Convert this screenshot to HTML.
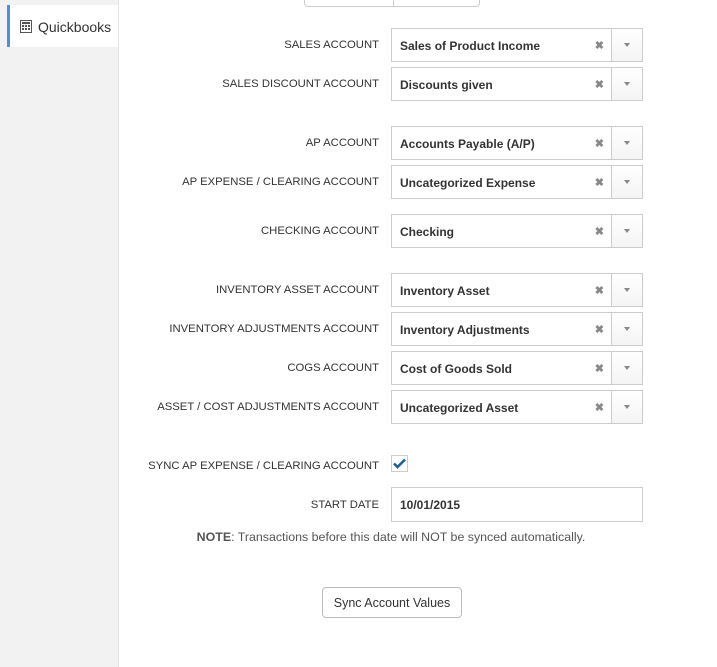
<!DOCTYPE html><html><head><style>
body{margin:0;width:717px;height:667px;background:#fff;font-family:"Liberation Sans",sans-serif;position:relative;overflow:hidden;color:#333}
.side{position:absolute;left:0;top:0;width:118px;height:667px;background:#f2f2f2;border-right:1px solid #e6e6e6}
.tab{position:absolute;left:7px;top:5px;width:111px;height:42px;background:#fff;border-left:3px solid #4a90e2;box-sizing:border-box;font-size:14px;line-height:44px;padding-left:28px;color:#333}
.lbl{position:absolute;right:338px;font-size:11.3px;color:#333;text-align:right;white-space:nowrap;margin-top:2px}
.sel{position:absolute;left:391px;width:252px;height:34px;border:1px solid #ccc;box-sizing:border-box;font-size:12px;font-weight:bold;line-height:34px;padding-left:8px;color:#333}
.sel .x{position:absolute;right:38px;top:0;color:#888;font-size:11px}
.sel .d{position:absolute;right:0;top:0;width:30px;height:32px;border-left:1px solid #ccc;background:linear-gradient(#fff,#f4f4f4)}
.sel .d:after{content:"";position:absolute;left:12px;top:14px;border:3.5px solid transparent;border-top:4px solid #888}
</style></head><body>
<div class="side"></div>
<div class="tab"><svg style="position:absolute;left:10px;top:15px" width="12" height="13" viewBox="0 0 12 13"><rect x="0.5" y="0.5" width="11" height="12" fill="none" stroke="#555"/><rect x="2" y="2" width="8" height="2" fill="#555"/><g fill="#555"><rect x="2" y="5" width="2" height="2"/><rect x="5" y="5" width="2" height="2"/><rect x="8" y="5" width="2" height="2"/><rect x="2" y="8" width="2" height="2"/><rect x="5" y="8" width="2" height="2"/><rect x="8" y="8" width="2" height="2"/></g></svg>Quickbooks</div>
<div style="position:absolute;left:304px;top:-10px;width:176px;height:17px;border:1px solid #ccc;border-radius:4px;box-sizing:border-box"></div>
<div style="position:absolute;left:393px;top:-10px;width:1px;height:17px;background:#ccc"></div>

<div class="lbl" style="top:37px">SALES ACCOUNT</div><div class="sel" style="top:28px">Sales of Product Income<span class="x">✖</span><span class="d"></span></div>
<div class="lbl" style="top:76px">SALES DISCOUNT ACCOUNT</div><div class="sel" style="top:67px">Discounts given<span class="x">✖</span><span class="d"></span></div>
<div class="lbl" style="top:135px">AP ACCOUNT</div><div class="sel" style="top:126px">Accounts Payable (A/P)<span class="x">✖</span><span class="d"></span></div>
<div class="lbl" style="top:174px">AP EXPENSE / CLEARING ACCOUNT</div><div class="sel" style="top:165px">Uncategorized Expense<span class="x">✖</span><span class="d"></span></div>
<div class="lbl" style="top:223px">CHECKING ACCOUNT</div><div class="sel" style="top:214px">Checking<span class="x">✖</span><span class="d"></span></div>
<div class="lbl" style="top:282px">INVENTORY ASSET ACCOUNT</div><div class="sel" style="top:273px">Inventory Asset<span class="x">✖</span><span class="d"></span></div>
<div class="lbl" style="top:321px">INVENTORY ADJUSTMENTS ACCOUNT</div><div class="sel" style="top:312px">Inventory Adjustments<span class="x">✖</span><span class="d"></span></div>
<div class="lbl" style="top:360px">COGS ACCOUNT</div><div class="sel" style="top:351px">Cost of Goods Sold<span class="x">✖</span><span class="d"></span></div>
<div class="lbl" style="top:399px">ASSET / COST ADJUSTMENTS ACCOUNT</div><div class="sel" style="top:390px">Uncategorized Asset<span class="x">✖</span><span class="d"></span></div>

<div class="lbl" style="top:458px">SYNC AP EXPENSE / CLEARING ACCOUNT</div>
<div style="position:absolute;left:391px;top:455px;width:17px;height:17px;border:1px solid #ccc;box-sizing:border-box"><svg width="15" height="15" viewBox="0 0 15 15" style="position:absolute;left:0;top:0"><path d="M2 7.5L5.5 11L13 3.5" stroke="#1f5f99" stroke-width="2.6" fill="none"/></svg></div>
<div class="lbl" style="top:497px">START DATE</div>
<div class="sel" style="top:487px;height:35px;line-height:35px">10/01/2015</div>
<div style="position:absolute;left:91px;width:600px;top:530px;text-align:center;font-size:12.4px;color:#555"><b>NOTE</b>: Transactions before this date will NOT be synced automatically.</div>
<div style="position:absolute;left:322px;top:587px;width:140px;height:31px;border:1px solid #bbb;border-radius:4px;box-sizing:border-box;font-size:12.5px;line-height:31px;text-align:center;color:#333">Sync Account Values</div>
</body></html>
